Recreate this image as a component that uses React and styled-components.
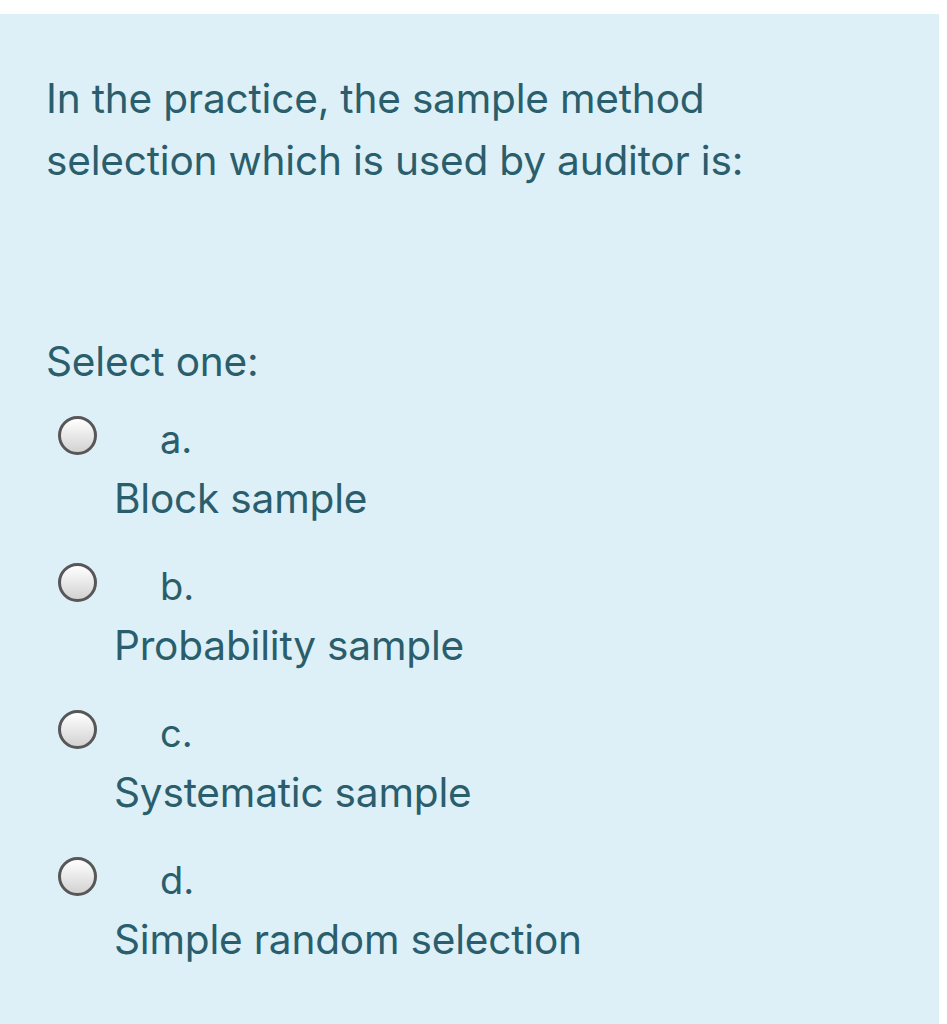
import React from 'react';
import styled, { createGlobalStyle } from 'styled-components';

const GlobalStyle = createGlobalStyle`
  html, body {
    margin: 0;
    padding: 0;
    background: #ffffff;
  }
  body {
    font-family: Inter, 'Liberation Sans', sans-serif;
  }
`;

const Page = styled.div`
  padding-top: 14px;
  width: 939px;
`;

const Panel = styled.div`
  background: #ddf0f7;
  padding: 54px 0 60px 46px;
  min-height: 1010px;
  box-sizing: border-box;
  color: #2b5e6c;
`;

const Question = styled.div`
  font-size: 40.6px;
  line-height: 62px;
  letter-spacing: -0.2px;
`;

const Prompt = styled.div`
  margin-top: 145px;
  font-size: 40.6px;
  line-height: 50px;
  letter-spacing: -0.2px;
`;

const Options = styled.div`
  display: flex;
  flex-direction: column;
  margin-top: 15px;
`;

const Option = styled.label`
  display: flex;
  flex-direction: column;
  height: 147px;
`;

const Head = styled.div`
  display: flex;
  align-items: center;
  height: 66px;
`;

const Radio = styled.span`
  width: 39px;
  height: 39px;
  margin-left: 12px;
  border-radius: 50%;
  border: 3px solid #575757;
  background: linear-gradient(#ffffff, #d2d2d2);
  box-sizing: border-box;
  flex-shrink: 0;
`;

const Letter = styled.span`
  margin: 8px 0 0 63px;
  font-size: 38px;
  line-height: 44px;
`;

const Answer = styled.div`
  margin: 6px 0 0 68px;
  font-size: 40.6px;
  line-height: 50px;
  letter-spacing: -0.2px;
`;

const options = [
  { letter: 'a.', text: 'Block sample' },
  { letter: 'b.', text: 'Probability sample' },
  { letter: 'c.', text: 'Systematic sample' },
  { letter: 'd.', text: 'Simple random selection' },
];

function App() {
  return (
    <Page>
      <GlobalStyle />
      <Panel>
        <Question>
          In the practice, the sample method
          <br />
          selection which is used by auditor is:
        </Question>
        <Prompt>Select one:</Prompt>
        <Options>
          {options.map((o) => (
            <Option key={o.letter}>
              <Head>
                <Radio />
                <Letter>{o.letter}</Letter>
              </Head>
              <Answer>{o.text}</Answer>
            </Option>
          ))}
        </Options>
      </Panel>
    </Page>
  );
}

export default App;
